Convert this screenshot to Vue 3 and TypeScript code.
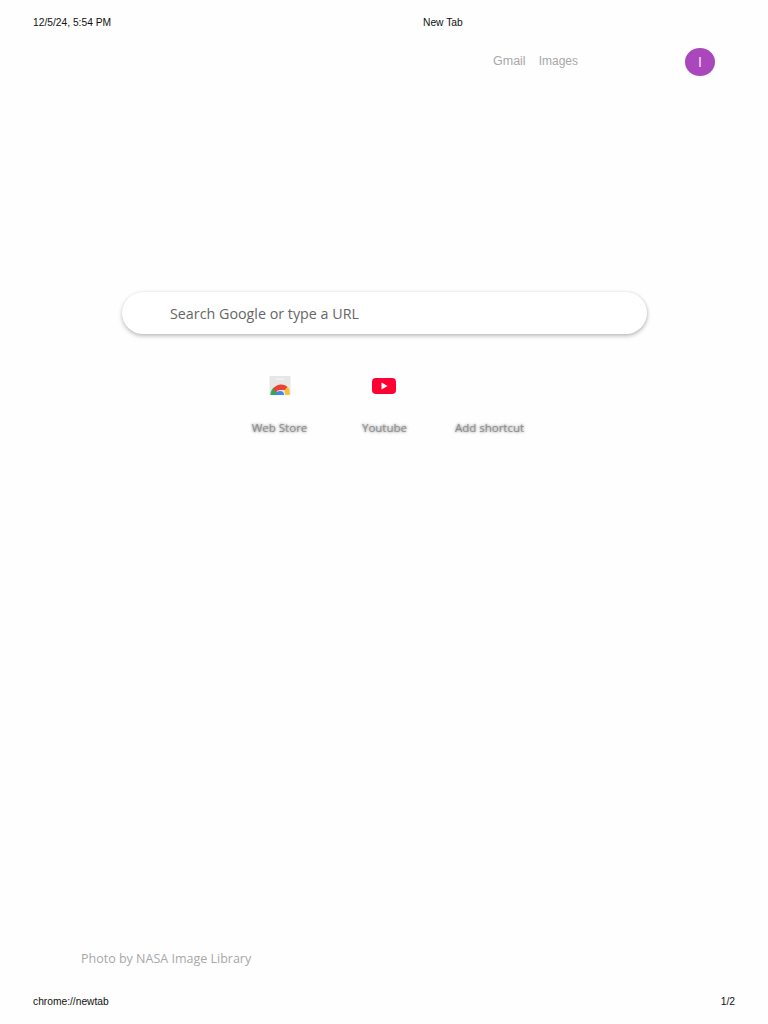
<template>
  <div class="page">
    <header class="print-head">
      <span class="print-date">12/5/24, 5:54 PM</span>
      <span>New Tab</span>
    </header>

    <nav class="top-nav">
      <a class="nav-link gmail">Gmail</a>
      <a class="nav-link">Images</a>
      <div class="avatar">I</div>
    </nav>

    <main class="center">
      <div class="search-box">Search Google or type a URL</div>

      <div class="shortcuts">
        <div class="shortcut">
          <div class="shortcut-icon">
            <svg width="22" height="20" viewBox="0 0 22 20">
              <rect x="0.5" y="0" width="21" height="19" fill="#e6e6e6" />
              <rect x="7" y="2.5" width="8" height="1.2" fill="#f6f6f6" />
              <path d="M1.5 19a9.5 9.5 0 0 1 4-8L9 19z" fill="#34a853" />
              <path d="M4 13a9.5 9.5 0 0 1 15-1.5l-1 2.5h-7a5 5 0 0 0-4 2z" fill="#ea4335" />
              <path d="M20.5 19a9.5 9.5 0 0 0-2-8.500l-3 4 1 4.500z" fill="#fbc02d" />
              <path d="M7 19a4 4 0 0 1 8 0z" fill="#4285f4" />
            </svg>
          </div>
          <span class="shortcut-label">Web Store</span>
        </div>

        <div class="shortcut">
          <div class="shortcut-icon youtube">
            <svg width="24" height="16" viewBox="0 0 24 16">
              <rect width="24" height="16" rx="4" fill="#ff0033" />
              <path d="M9.500 4.600v6.800l6-3.400z" fill="#fff" />
            </svg>
          </div>
          <span class="shortcut-label">Youtube</span>
        </div>

        <div class="shortcut">
          <div class="shortcut-icon"></div>
          <span class="shortcut-label">Add shortcut</span>
        </div>
      </div>
    </main>

    <div class="attribution">Photo by NASA Image Library</div>

    <footer class="print-foot">
      <span>chrome://newtab</span>
      <span>1/2</span>
    </footer>
  </div>
</template>

<script setup lang="ts">
</script>

<style>
html,
body {
  background: #fff;
}
</style>

<style scoped>
.page {
  width: 768px;
  height: 1024px;
  display: flex;
  flex-direction: column;
  overflow: hidden;
  background: #fefefe;
  font-family: "Liberation Sans", Arial, sans-serif;
}

.print-head {
  display: flex;
  height: 16px;
  margin-top: 15px;
  padding: 0 33px;
  font-size: 10.25px;
  line-height: 16px;
  color: #111;
}

.print-date {
  width: 390px;
}

.top-nav {
  display: flex;
  align-items: center;
  height: 28px;
  margin-top: 16px;
  padding-left: 493px;
}

.nav-link {
  font-size: 12px;
  color: #a8a8a8;
}

.gmail {
  margin-right: 13px;
  font-size: 12.5px;
}

.avatar {
  width: 30px;
  height: 28px;
  margin-top: 2px;
  margin-left: 107px;
  border-radius: 50%;
  background: #ab47bc;
  color: #f3e5f5;
  font-size: 14px;
  line-height: 28px;
  text-align: center;
}

.center {
  flex: 1;
  padding-top: 217px;
}

.search-box {
  width: 525px;
  height: 42px;
  margin-left: 122px;
  padding-left: 48px;
  box-sizing: border-box;
  border-radius: 21px;
  background: #fff;
  box-shadow: 0 2px 4px rgba(0, 0, 0, 0.25), 1px 0 3px rgba(0, 0, 0, 0.07);
  font-family: "Open Sans", sans-serif;
  font-size: 14.3px;
  line-height: 43px;
  color: #666;
}

.shortcuts {
  display: flex;
  margin-top: 40px;
  margin-left: 227px;
}

.shortcut {
  display: flex;
  flex-direction: column;
  align-items: center;
  width: 105px;
}

.shortcut-icon {
  display: flex;
  align-items: center;
  justify-content: center;
  width: 24px;
  height: 24px;
}

.youtube {
  margin-left: -2px;
}

.shortcut-label {
  margin-top: 21px;
  font-family: "Open Sans", sans-serif;
  font-size: 11.5px;
  line-height: 18px;
  color: #8f8f8f;
  text-shadow: 0 0 3px rgba(0, 0, 0, 0.6);
  white-space: nowrap;
}

.attribution {
  margin-left: 81px;
  font-family: "Open Sans", sans-serif;
  font-size: 12.5px;
  line-height: 18px;
  color: #a8a8a8;
}

.print-foot {
  display: flex;
  justify-content: space-between;
  height: 16px;
  margin-top: 26px;
  margin-bottom: 14px;
  padding: 0 33px;
  font-size: 10.25px;
  line-height: 16px;
  color: #111;
}
</style>
